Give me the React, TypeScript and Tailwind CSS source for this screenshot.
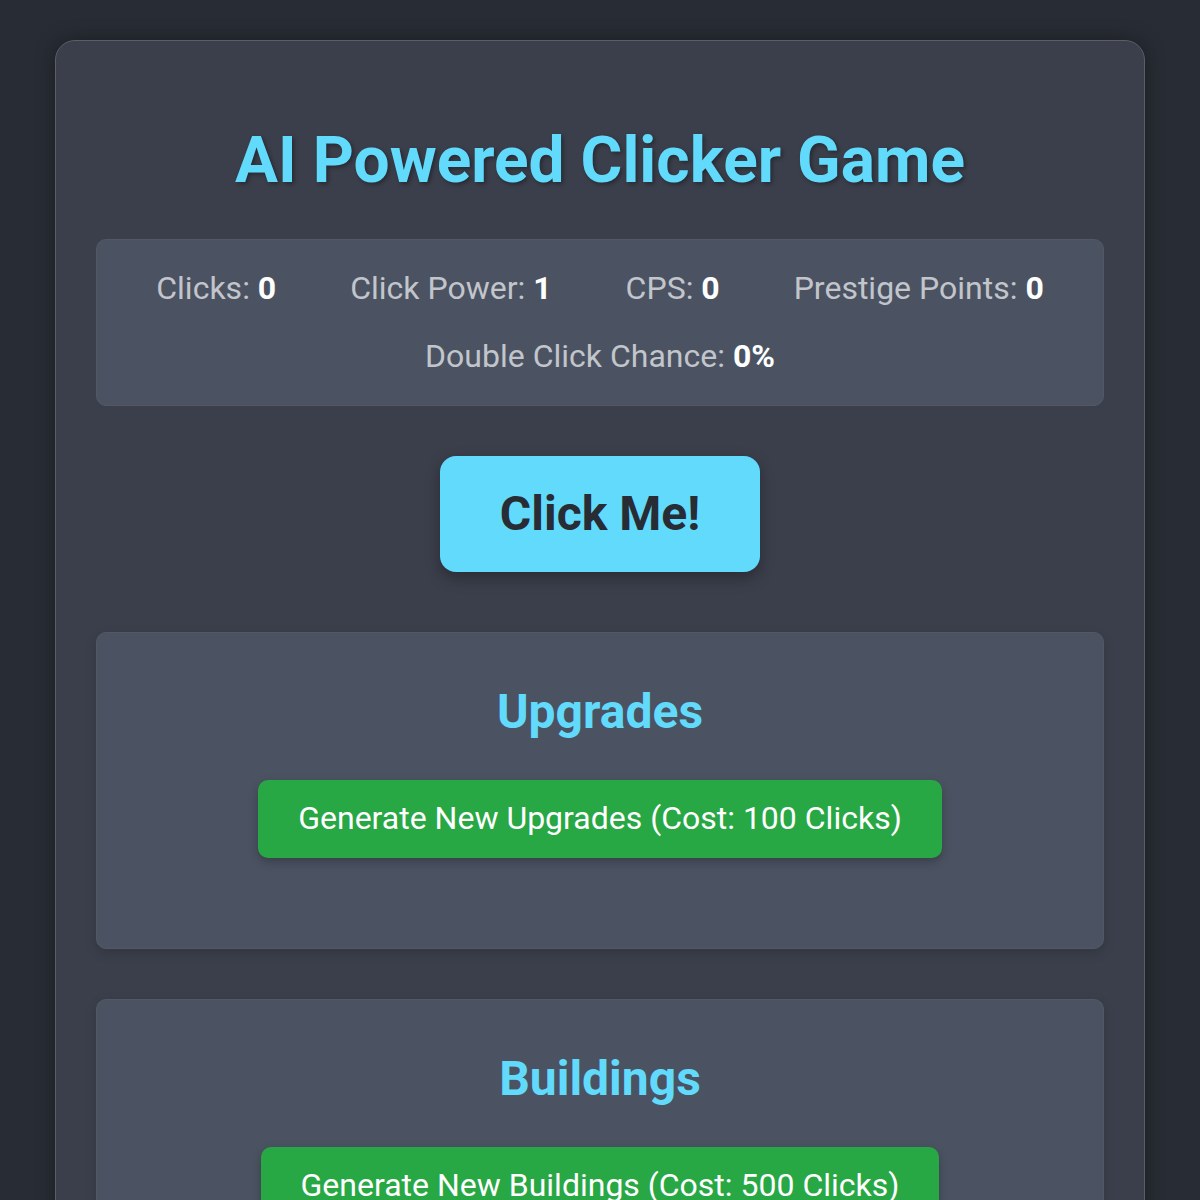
import { useState } from 'react';

const Stat = ({ label, value }: { label: string; value: string | number }) => (
  <div className="mx-[37px] my-[15px] text-[32px] leading-[37.5px] text-[#c2c5cb]">
    {label}: <span className="font-bold text-white">{value}</span>
  </div>
);

const Section = ({
  title,
  buttonLabel,
  onGenerate,
}: {
  title: string;
  buttonLabel: string;
  onGenerate: () => void;
}) => (
  <div className="rounded-[10px] border border-[#535862] bg-[#4b5362] px-[30px] pt-[30px] pb-[90px] text-center shadow-[0_4px_12px_rgba(0,0,0,0.15)]">
    <h2 className="mt-[21px] mb-[40px] text-[48px] leading-[56px] font-bold text-[#61dafb]">{title}</h2>
    <button
      onClick={onGenerate}
      className="rounded-[10px] bg-[#28a745] px-[40px] py-[20px] text-[32px] leading-[37.5px] text-white shadow-[0_4px_10px_rgba(0,0,0,0.25)] hover:bg-[#218838]"
    >
      {buttonLabel}
    </button>
  </div>
);

const App = () => {
  const [clicks, setClicks] = useState(0);
  const [clickPower] = useState(1);
  const [cps] = useState(0);
  const [prestige] = useState(0);
  const [doubleChance] = useState(0);

  return (
    <div className="min-h-screen bg-[#282c34] pt-[40px] pb-[40px] font-['Roboto','Noto_Sans',sans-serif]">
      <div className="mx-auto w-[1090px] rounded-[20px] border border-[#5a5e66] bg-[#3b3f4b] p-[40px] shadow-[0_0_20px_rgba(0,0,0,0.35)]">
        <h1 className="mt-[42px] mb-[41px] text-center text-[64px] leading-[75px] font-bold text-[#61dafb] [text-shadow:2px_2px_4px_rgba(0,0,0,0.35)]">
          AI Powered Clicker Game
        </h1>

        <div className="flex flex-wrap justify-center rounded-[10px] border border-[#535862] bg-[#4b5362] px-[20px] py-[15px]">
          <Stat label="Clicks" value={clicks} />
          <Stat label="Click Power" value={clickPower} />
          <Stat label="CPS" value={cps} />
          <Stat label="Prestige Points" value={prestige} />
          <Stat label="Double Click Chance" value={`${doubleChance}%`} />
        </div>

        <div className="mt-[50px] mb-[60px] flex justify-center">
          <button
            onClick={() => setClicks(clicks + clickPower)}
            className="rounded-[16px] bg-[#61dafb] px-[60px] py-[30px] text-[48px] leading-[56px] font-bold text-[#282c34] shadow-[0_6px_15px_rgba(0,0,0,0.3)] hover:bg-[#4fc8e8]"
          >
            Click Me!
          </button>
        </div>

        <div className="flex flex-col gap-[50px]">
          <Section title="Upgrades" buttonLabel="Generate New Upgrades (Cost: 100 Clicks)" onGenerate={() => {}} />
          <Section title="Buildings" buttonLabel="Generate New Buildings (Cost: 500 Clicks)" onGenerate={() => {}} />
        </div>
      </div>
    </div>
  );
};

export default App;
